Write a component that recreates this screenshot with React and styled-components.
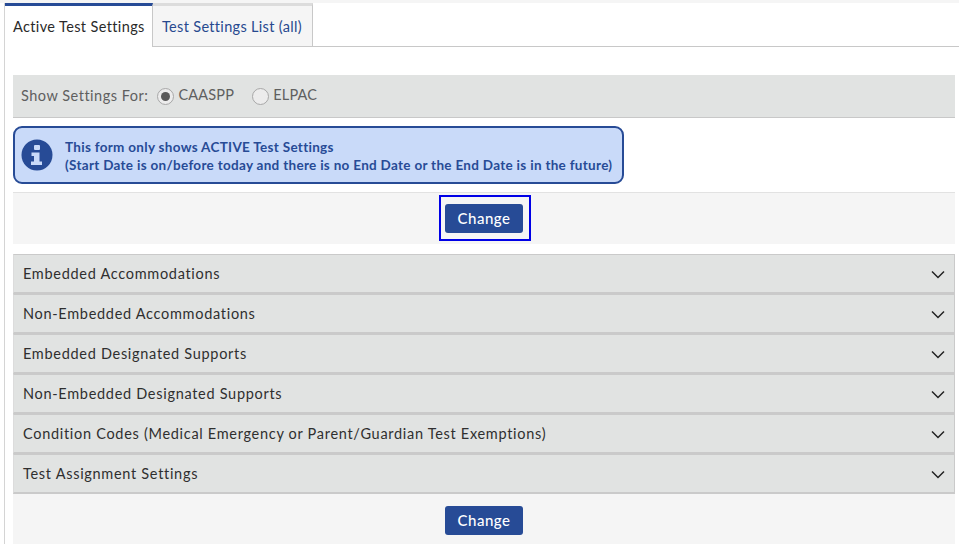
import React from "react";
import styled, { createGlobalStyle } from "styled-components";

const GlobalStyle = createGlobalStyle`
    html, body {
        margin : 0;
        padding : 0;
        background : #fff;
        font-family : "Lato", "Open Sans", sans-serif;
    }
`

const Page = styled.div`
    width : 959px;
    height : 544px;
    overflow : hidden;
    box-sizing : border-box;
    padding-top : 3px;
    background : linear-gradient(#f5f5f5, #f5f5f5) no-repeat top / 100% 3px, #fff;
`

const Frame = styled.div`
    margin-left : 4px;
    border-left : 1px solid #d4d4d4;
    height : 541px;
    box-sizing : border-box;
`

const TabBar = styled.div`
    display : flex;
    height : 44px;
    box-sizing : border-box;
    border-bottom : 1px solid #c8c8c8;
`

const Tab = styled.div`
    box-sizing : border-box;
    height : ${p => p.$active ? "44px" : "43px"};
    width : ${p => p.$width}px;
    padding-left : ${p => p.$pad}px;
    display : flex;
    align-items : center;
    white-space : nowrap;
    font-size : 14.5px;
    letter-spacing : ${p => p.$active ? ".37px" : ".32px"};
    color : ${p => p.$active ? "#2a2a2a" : "#27498f"};
    background : ${p => p.$active ? "#fff" : "#f5f5f5"};
    border-top : ${p => p.$active ? "3px solid #274b96" : "3px solid #dcdcdc"};
    border-right : 1px solid #c8c8c8;
`

const Content = styled.div`
    padding : 28px 0 0 8px;
    width : 950px;
    box-sizing : border-box;
`

const FilterBar = styled.div`
    height : 43px;
    box-sizing : border-box;
    display : flex;
    align-items : center;
    padding : 0 0 2px 8px;
    background : #e1e3e2;
    border-bottom : 1px solid #c8c8c8;
    font-size : 14.5px;
    letter-spacing : .5px;
    color : #5f5f5f;
`

const RadioLabel = styled.label`
    display : flex;
    align-items : center;
    margin-left : ${p => p.$gap}px;
    padding-bottom : 1px;
    letter-spacing : .2px;
`

const RadioDot = styled.span`
    width : 17px;
    height : 17px;
    box-sizing : border-box;
    margin : 4px 4px 0 0;
    border-radius : 50%;
    border : 1px solid #a8a8a8;
    background : #ececec;
    display : flex;
    align-items : center;
    justify-content : center;
    &::after {
        content : "";
        width : 9px;
        height : 9px;
        border-radius : 50%;
        background : ${p => p.$checked ? "#5a5a5a" : "transparent"};
    }
`

const Notice = styled.div`
    margin-top : 8px;
    width : 611px;
    height : 58px;
    box-sizing : border-box;
    display : flex;
    align-items : center;
    background : #c9daf9;
    border : 2px solid #274b96;
    border-radius : 9px;
    padding-left : 6px;
    color : #274b96;
    font-size : 13.5px;
    font-weight : 700;
    line-height : 18px;
    letter-spacing : .3px;
`

const NoticeText = styled.div`
    margin : 1px 0 0 12px;
    white-space : nowrap;
`

const ButtonRow = styled.div`
    display : flex;
    justify-content : center;
    align-items : center;
    background : #f5f5f5;
    height : ${p => p.$height}px;
    margin-top : ${p => p.$top}px;
    padding-bottom : ${p => p.$line ? 2 : 0}px;
    border-top : ${p => p.$line ? "1px solid #e2e2e2" : "0"};
    box-sizing : border-box;
`

const FocusRing = styled.div`
    display : flex;
    box-sizing : border-box;
    height : 46px;
    padding : 7px 6px 6px 4px;
    margin-left : 2px;
    border : 2px solid #0000e6;
`

const Button = styled.button`
    width : 78px;
    height : 29px;
    padding : 0;
    border : 0;
    border-radius : 3px;
    background : #274b96;
    color : #fff;
    font-family : inherit;
    font-size : 15px;
    font-weight : 500;
    letter-spacing : .5px;
`

const Accordion = styled.div`
    margin-top : 10px;
`

const Section = styled.div`
    height : 40px;
    box-sizing : border-box;
    display : flex;
    align-items : center;
    justify-content : space-between;
    padding : 0 9px 0 9px;
    background : #e1e3e2;
    border : 1px solid #cacaca;
    border-width : 1px 1px 2px 1px;
    border-left-color : #dcdcdc;
    font-size : 14.5px;
    letter-spacing : .7px;
    color : #2f2f2f;
`

const InfoIcon = () => (
    <svg width="32" height="32" viewBox="0 0 32 32">
        <circle cx="16" cy="16" r="15.500" fill="#274b96" />
        <rect x="13" y="6" width="6" height="5" rx="1" fill="#c9daf9" />
        <path d="M10.500 13.500h8v9h2.500v3.500h-11v-3.500h3v-5.500h-2.500z" fill="#c9daf9" />
    </svg>
)

const ChevronIcon = styled.svg`
    margin-top : 2px;
`

const Chevron = () => (
    <ChevronIcon width="14" height="9" viewBox="0 0 14 9">
        <path d="M1 1.500l6 6 6-6" fill="none" stroke="#222" strokeWidth="1.500" />
    </ChevronIcon>
)

const sections = [
    "Embedded Accommodations",
    "Non-Embedded Accommodations",
    "Embedded Designated Supports",
    "Non-Embedded Designated Supports",
    "Condition Codes (Medical Emergency or Parent/Guardian Test Exemptions)",
    "Test Assignment Settings",
]

export default function App() {
    return (
        <Page>
            <GlobalStyle />
            <Frame>
                <TabBar>
                    <Tab $active $width={148} $pad={8}>Active Test Settings</Tab>
                    <Tab $width={160} $pad={9}>Test Settings List (all)</Tab>
                </TabBar>
                <Content>
                    <FilterBar>
                        Show Settings For:
                        <RadioLabel $gap={9}><RadioDot $checked />CAASPP</RadioLabel>
                        <RadioLabel $gap={18}><RadioDot />ELPAC</RadioLabel>
                    </FilterBar>
                    <Notice>
                        <InfoIcon />
                        <NoticeText>
                            This form only shows ACTIVE Test Settings<br />
                            (Start Date is on/before today and there is no End Date or the End Date is in the future)
                        </NoticeText>
                    </Notice>
                    <ButtonRow $height={52} $top={8} $line>
                        <FocusRing><Button>Change</Button></FocusRing>
                    </ButtonRow>
                    <Accordion>
                        {sections.map(s => (
                            <Section key={s}>{s}<Chevron /></Section>
                        ))}
                    </Accordion>
                    <ButtonRow $height={52} $top={0}>
                        <Button>Change</Button>
                    </ButtonRow>
                </Content>
            </Frame>
        </Page>
    )
}
